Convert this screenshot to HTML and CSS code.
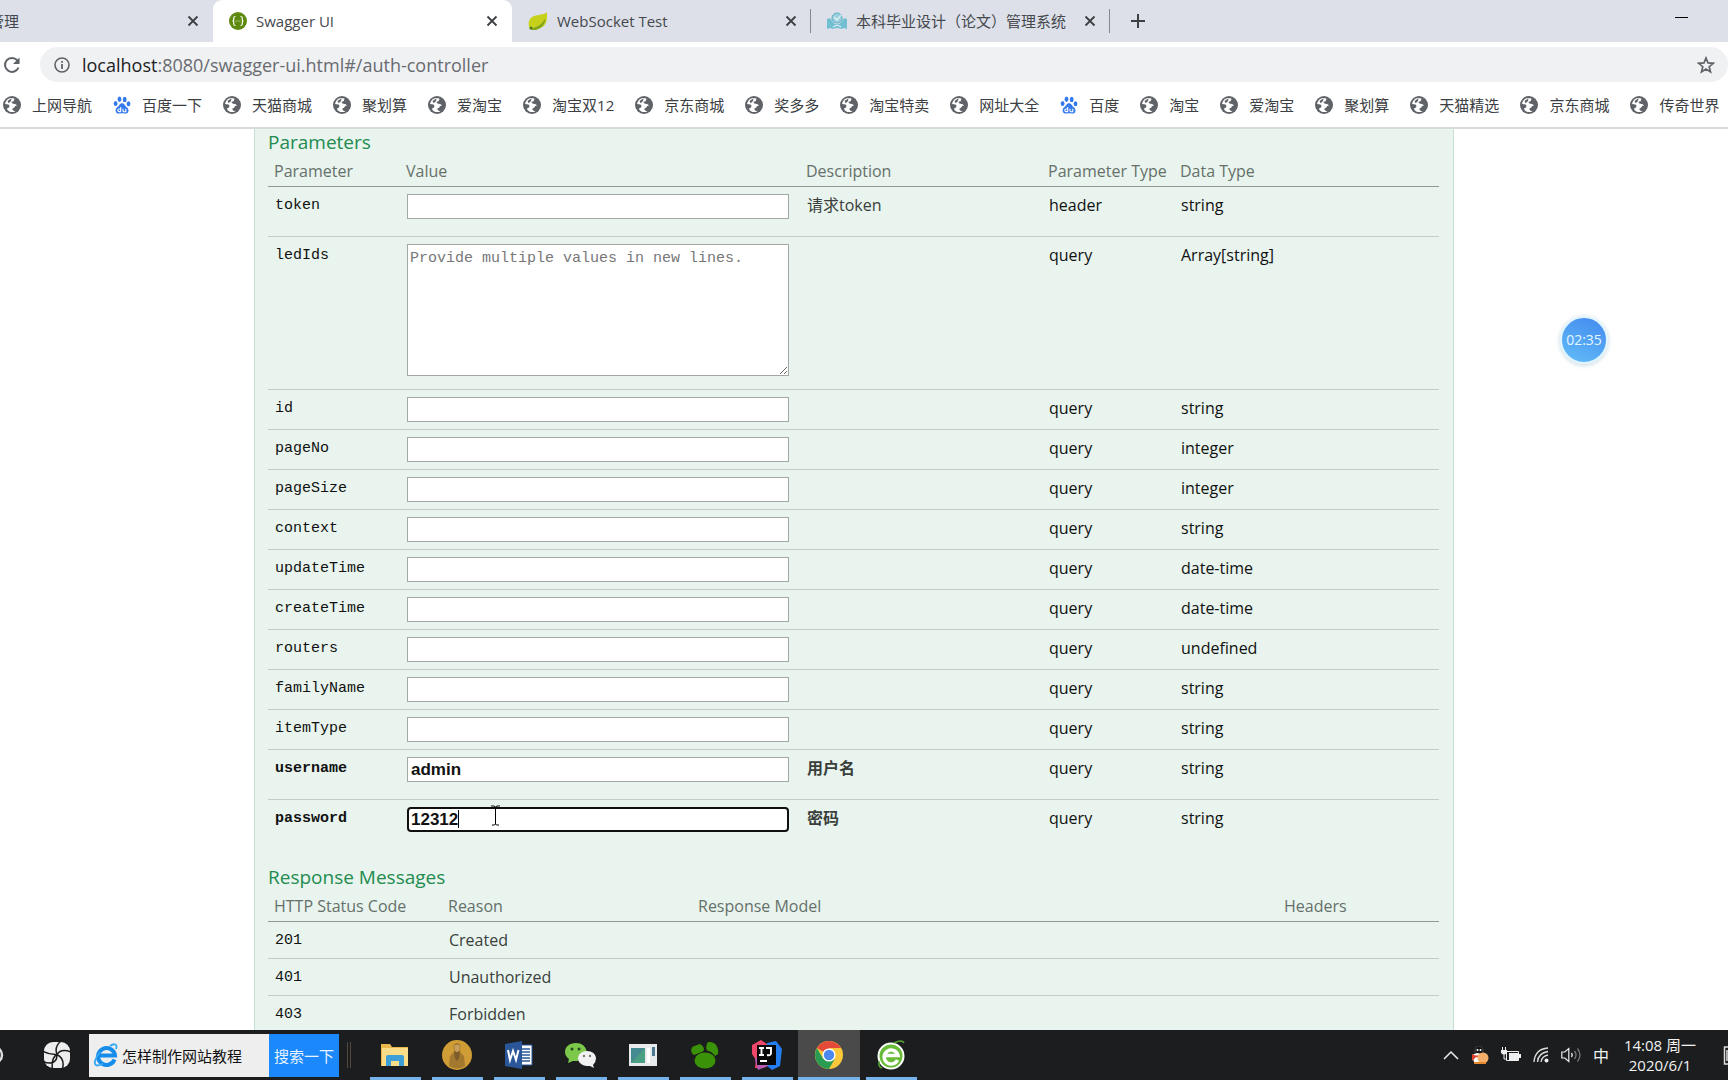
FILE: index.html
```html
<!DOCTYPE html>
<html lang="zh-CN">
<head>
<meta charset="utf-8">
<title>Swagger UI</title>
<link rel="stylesheet" href="styles.css">
</head>
<body>
<svg class="defs" aria-hidden="true">
  <symbol id="globe" viewBox="0 0 18 18"><circle cx="9" cy="9" r="9" fill="#5f6368"/><path d="M8 2C5 2.300 2.600 4.500 2 8L5.500 8.500 6.500 9.800 6 11.500 4 12.500 4.600 14.200C7 16.500 10 16.600 12.500 15.200L10 14.500 9.200 12.700 11 11.700 12.200 10 14 9.400 12.700 8.200 9.500 7.600 8.300 5.900 10.800 4.900 11.500 2.600Z" fill="#fff"/><path d="M4.500 5l4-2.800-.5 2.900-2.300 2.200Z" fill="#5f6368"/></symbol>
  <symbol id="baidu" viewBox="0 0 18 18"><g fill="#3479ee"><ellipse cx="6.500" cy="3.300" rx="1.900" ry="2.700"/><ellipse cx="11.700" cy="3.400" rx="1.900" ry="2.700"/><ellipse cx="2.600" cy="7.600" rx="1.900" ry="2.500"/><ellipse cx="15.500" cy="7.700" rx="1.900" ry="2.500"/><path d="M9 7.200C6.600 7.200 6.400 9.700 4.400 11 1.400 13.200 2.300 17.700 5.800 17.600Q9 17 12.300 17.600C15.900 17.700 16.600 13.300 13.800 11.200 11.800 9.700 11.400 7.200 9 7.200Z"/></g><path d="M7.700 11v4.700M7.700 13h-1.500q-1.400 0-1.400 1.300t1.400 1.300h1.500M10 12.700v2q0 1 1 1h1.800v-3" fill="none" stroke="#fff" stroke-width="1.100"/></symbol>
  <symbol id="close" viewBox="0 0 12 12"><path d="M1.500 1.500l9 9M10.500 1.500l-9 9" stroke="#3c4043" stroke-width="1.800"/></symbol>
</svg>

<header class="browser">
  <nav class="tabs" aria-label="标签页">
    <div class="tab tab-first"><span class="tab-title clipped">管理</span><button class="icon-btn tab-close" aria-label="关闭"><svg width="12" height="12"><use href="#close"/></svg></button></div>
    <div class="tab active">
      <svg width="18" height="18" viewBox="0 0 18 18"><circle cx="9" cy="9" r="9" fill="#5f8a10"/><path d="M6.500 4.500q-1.800 0-1.800 1.800v1.400q0 1.300-1.200 1.300 1.200 0 1.200 1.300v1.400q0 1.800 1.800 1.800M11.500 4.500q1.800 0 1.800 1.800v1.400q0 1.300 1.200 1.300-1.200 0-1.200 1.300v1.400q0 1.800-1.800 1.800" fill="none" stroke="#fff" stroke-width="1.200"/><path d="M6.600 9h1M8.500 9h1M10.400 9h1" stroke="#d8eaa8" stroke-width="1.200"/></svg>
      <span class="tab-title">Swagger UI</span><button class="icon-btn tab-close" aria-label="关闭"><svg width="12" height="12"><use href="#close"/></svg></button></div>
    <div class="tab divided">
      <svg width="20" height="20" viewBox="0 0 20 20"><path d="M19 1C16 4 11 3.500 6 5 0 7 0 13 1.500 17.500 4 20 13 19 17 13.500 19.500 10 19 5 19 1Z" fill="#c7d11c"/><path d="M1.500 17.500C8 17 14 14 17 7.500 18 12 14 17 9 18.500Q5 20 1.500 17.500Z" fill="#82a51c"/><circle cx="3" cy="17" r="1.500" fill="#4b7e22"/></svg>
      <span class="tab-title">WebSocket Test</span><button class="icon-btn tab-close" aria-label="关闭"><svg width="12" height="12"><use href="#close"/></svg></button></div>
    <div class="tab divided">
      <svg width="20" height="18" viewBox="0 0 20 18"><path d="M0 7Q4 5 5 9q5 7 10 0 1-4 5-2v10l-3-1-3 1q-4-2-8 0l-3-1-3 1Z" fill="#73bfd2"/><circle cx="10" cy="6" r="5" fill="#9ccfdd" stroke="#5bb0c7"/><path d="M7 5l3 3 4-5M6 15q4-3 8 0" fill="none" stroke="#e8f5f8" stroke-width="1.200"/></svg>
      <span class="tab-title">本科毕业设计（论文）管理系统</span><button class="icon-btn tab-close" aria-label="关闭"><svg width="12" height="12"><use href="#close"/></svg></button></div>
    <button class="icon-btn new-tab" aria-label="新标签页"><svg width="16" height="16"><path d="M8 1v14M1 8h14" stroke="#3c4043" stroke-width="2"/></svg></button>
    <button class="icon-btn minimize" aria-label="最小化"><svg width="13" height="3"><path d="M0 1.500h13" stroke="#000"/></svg></button>
  </nav>
  <div class="toolbar">
    <button class="icon-btn reload" aria-label="重新加载"><svg width="20" height="20" viewBox="0 0 20 20"><path d="M16.500 12.500A7 7 0 1 1 15.200 5.200L17 7" fill="none" stroke="#5f6368" stroke-width="2"/><path d="M17.500 2.500v6.500h-6.500Z" fill="#5f6368"/></svg></button>
    <div class="omnibox">
      <svg width="16" height="16" viewBox="0 0 16 16"><circle cx="8" cy="8" r="7" fill="none" stroke="#5f6368" stroke-width="1.600"/><path d="M8 7v5M8 4v1.800" stroke="#5f6368" stroke-width="1.800"/></svg>
      <span class="url"><b>localhost</b>:8080/swagger-ui.html#/auth-controller</span>
      <button class="icon-btn" aria-label="收藏"><svg width="18" height="18" viewBox="0 0 18 18"><path d="M9 2l2 4.900 5.300.4-4.100 3.400 1.300 5.200L9 13.100l-4.500 2.800 1.300-5.200L1.700 7.300 7 6.900Z" fill="none" stroke="#5f6368" stroke-width="1.700"/></svg></button>
    </div>
  </div>
  <nav class="bookmarks" aria-label="书签">
    <a href="#"><svg><use href="#globe"/></svg>上网导航</a>
    <a href="#"><svg><use href="#baidu"/></svg>百度一下</a>
    <a href="#"><svg><use href="#globe"/></svg>天猫商城</a>
    <a href="#"><svg><use href="#globe"/></svg>聚划算</a>
    <a href="#"><svg><use href="#globe"/></svg>爱淘宝</a>
    <a href="#"><svg><use href="#globe"/></svg>淘宝双12</a>
    <a href="#"><svg><use href="#globe"/></svg>京东商城</a>
    <a href="#"><svg><use href="#globe"/></svg>奖多多</a>
    <a href="#"><svg><use href="#globe"/></svg>淘宝特卖</a>
    <a href="#"><svg><use href="#globe"/></svg>网址大全</a>
    <a href="#"><svg><use href="#baidu"/></svg>百度</a>
    <a href="#"><svg><use href="#globe"/></svg>淘宝</a>
    <a href="#"><svg><use href="#globe"/></svg>爱淘宝</a>
    <a href="#"><svg><use href="#globe"/></svg>聚划算</a>
    <a href="#"><svg><use href="#globe"/></svg>天猫精选</a>
    <a href="#"><svg><use href="#globe"/></svg>京东商城</a>
    <a href="#"><svg><use href="#globe"/></svg>传奇世界</a>
  </nav>
</header>

<main class="page">
  <form class="operation">
    <h4>Parameters</h4>
    <table class="params">
      <colgroup><col class="c-name"><col class="c-value"><col class="c-desc"><col class="c-type"><col></colgroup>
      <thead><tr><th>Parameter</th><th>Value</th><th>Description</th><th>Parameter Type</th><th>Data Type</th></tr></thead>
      <tbody>
        <tr class="tall"><td><label for="token">token</label></td><td><input id="token" type="text"></td><td class="desc">请求token</td><td>header</td><td>string</td></tr>
        <tr class="area"><td><label for="ledIds">ledIds</label></td><td><textarea id="ledIds" placeholder="Provide multiple values in new lines."></textarea></td><td></td><td>query</td><td>Array[string]</td></tr>
        <tr><td><label for="id">id</label></td><td><input id="id" type="text"></td><td></td><td>query</td><td>string</td></tr>
        <tr><td><label for="pageNo">pageNo</label></td><td><input id="pageNo" type="text"></td><td></td><td>query</td><td>integer</td></tr>
        <tr><td><label for="pageSize">pageSize</label></td><td><input id="pageSize" type="text"></td><td></td><td>query</td><td>integer</td></tr>
        <tr><td><label for="context">context</label></td><td><input id="context" type="text"></td><td></td><td>query</td><td>string</td></tr>
        <tr><td><label for="updateTime">updateTime</label></td><td><input id="updateTime" type="text"></td><td></td><td>query</td><td>date-time</td></tr>
        <tr><td><label for="createTime">createTime</label></td><td><input id="createTime" type="text"></td><td></td><td>query</td><td>date-time</td></tr>
        <tr><td><label for="routers">routers</label></td><td><input id="routers" type="text"></td><td></td><td>query</td><td>undefined</td></tr>
        <tr><td><label for="familyName">familyName</label></td><td><input id="familyName" type="text"></td><td></td><td>query</td><td>string</td></tr>
        <tr><td><label for="itemType">itemType</label></td><td><input id="itemType" type="text"></td><td></td><td>query</td><td>string</td></tr>
        <tr class="tall required"><td><label for="username">username</label></td><td><input id="username" type="text" value="admin"></td><td class="desc">用户名</td><td>query</td><td>string</td></tr>
        <tr class="tall required"><td><label for="password">password</label></td><td><div class="field"><input id="password" class="focused" type="text" value="12312"><span class="caret"></span><svg class="ibeam" width="9" height="21" viewBox="0 0 9 21"><path d="M0 1h3l1.500 1L6 1h3M4.500 2v17M1 20h2.500l1-1 1 1H8" fill="none" stroke="#000"/></svg></div></td><td class="desc">密码</td><td>query</td><td>string</td></tr>
      </tbody>
    </table>
    <h4 class="responses-title">Response Messages</h4>
    <table class="responses">
      <colgroup><col class="c-code"><col class="c-reason"><col class="c-model"><col></colgroup>
      <thead><tr><th>HTTP Status Code</th><th>Reason</th><th>Response Model</th><th>Headers</th></tr></thead>
      <tbody>
        <tr><td class="code">201</td><td>Created</td><td></td><td></td></tr>
        <tr><td class="code">401</td><td>Unauthorized</td><td></td><td></td></tr>
        <tr><td class="code">403</td><td>Forbidden</td><td></td><td></td></tr>
      </tbody>
    </table>
  </form>
  <div class="timer">02:35</div>
</main>

<footer class="taskbar">
  <svg class="cortana" width="4" height="20" viewBox="0 0 4 20"><circle cx="-6" cy="10" r="8" fill="none" stroke="#ddd" stroke-width="2.500"/></svg>
  <button class="icon-btn" aria-label="浏览器"><svg width="28" height="28" viewBox="0 0 28 28"><rect x="1" y="1" width="26" height="26" rx="9" fill="#eee"/><path d="M0 10.500Q7 14 14 13.500 11 6 18 0M14 13.500Q18 7 28 11M14 13.500q8 4 5.500 14.500M14 13.500Q14 22 7 22 3 22 0 20M14 13.500Q8 17 9.500 28" fill="none" stroke="#1c1d1e" stroke-width="1.500"/></svg></button>
  <div class="search">
    <svg width="24" height="24" viewBox="0 0 24 24"><path d="M20.500 16.500A8.500 8.500 0 1 1 21 12.500H6" fill="none" stroke="#168ceb" stroke-width="4"/><path d="M16 3c4-3 8-2 6 3M6 9C1 15-1 22 3 22.500q3 0 6-2" fill="none" stroke="#35a8f2" stroke-width="1.800"/></svg>
    <input type="text" aria-label="搜索" value="怎样制作网站教程"><button>搜索一下</button>
  </div>
  <span class="grip"></span>
  <div class="apps">
    <button aria-label="文件资源管理器"><svg width="28" height="24" viewBox="0 0 28 24"><path d="M0 1h9l2 3h16v19H0Z" fill="#e8b84d"/><path d="M1 5h26v18H1Z" fill="#fbdc88"/><path d="M5 23v-9q0-2 2-2h14q2 0 2 2v9h-5v-5h-8v5Z" fill="#3d9fd6"/></svg></button>
    <button aria-label="头像应用"><svg width="30" height="30" viewBox="0 0 30 30"><circle cx="15" cy="15" r="15" fill="#d09c35"/><path d="M11.500 5q3.500-4 7 0l-.5 7 4 4 1 10q-8 5-16 0l1-10 4-4Z" fill="#a2792f"/><path d="M12.500 5h5v5l-2.500 3-2.500-3Z" fill="#c79e5c"/><path d="M12 11q3 2 6 0l-1 7-2 3-2-3Z" fill="#7c5b2a"/></svg></button>
    <button aria-label="Word"><svg width="28" height="28" viewBox="0 0 28 28"><path d="M14 4h13v20H14Z" fill="#fff" stroke="#2b579a"/><path d="M16 8h9M16 11h9M16 14h9M16 17h9M16 20h9" stroke="#2b579a" stroke-width="1.300"/><path d="M0 3l17-3v28L0 25Z" fill="#2b579a"/><path d="M3 9l2 10 3-9 3 9 2.500-10" fill="none" stroke="#fff" stroke-width="2"/></svg></button>
    <button aria-label="微信"><svg width="32" height="26" viewBox="0 0 32 26"><path d="M11 1C4 1 0 5 0 10q0 4 4 7l-1 4 5-2h4q9-1 10-9Q20 1 11 1Z" fill="#7bc84b"/><path d="M22 9c-6 0-9 4-9 7.500S17 24 22 24h3l4 2-1-3q3-3 3-6.500C31 12 27 9 22 9Z" fill="#f2f2f2"/><circle cx="7" cy="7" r="1.500" fill="#294c1e"/><circle cx="14" cy="7" r="1.500" fill="#294c1e"/><circle cx="19" cy="14" r="1.200" fill="#777"/><circle cx="25" cy="14" r="1.200" fill="#777"/></svg></button>
    <button aria-label="应用窗口"><svg width="28" height="24" viewBox="0 0 28 24"><path d="M0 1h28v22H0Z" fill="#e8ebed"/><path d="M2 5h14v15H2Z" fill="#438b91"/><path d="M2 20L16 5v15Z" fill="#4b9f83"/><path d="M18 5h3v15h-3Z" fill="#fff"/><path d="M23 4h3v9h-3Z" fill="#4c7990"/></svg></button>
    <button aria-label="绿色应用"><svg width="28" height="28" viewBox="0 0 28 28"><g fill="#399207"><ellipse cx="14" cy="19.500" rx="10.500" ry="8"/><path d="M9 3C13 5 14 9 12 10.500L3 14C-1 12 0 7 2 5.500ZM17 1c8-1 11 6 10 12l-3 2c-2-3-5-5-8-5.500Q14 5 17 1Z"/></g></svg></button>
    <button aria-label="IntelliJ IDEA"><svg width="30" height="30" viewBox="0 0 30 30"><path d="M0 5L9 0l9 6-6 22H3l1-8-4-6Z" fill="#ef4768"/><path d="M15 3l9-2 6 8-2 17-8 4-7-6Z" fill="#247ef0"/><path d="M3 20l7-12 6 18-10 4Z" fill="#b75bb5"/><path d="M5 5h19v20H5Z" fill="#080808"/><path d="M7 8h5M9.500 8v7M7 15h5M14 8h5v5q0 3-4 2M8 21h7" fill="none" stroke="#fff" stroke-width="1.900"/></svg></button>
    <button class="current" aria-label="Chrome"><svg width="28" height="28" viewBox="0 0 28 28"><circle cx="14" cy="14" r="14" fill="#fbc83b"/><path d="M14 14L1.900 7A14 14 0 0 1 26.100 7H14Z" fill="#e5493a"/><path d="M1.900 7A14 14 0 0 0 14 28L20 17.500 8 17.500Z" fill="#2a9c52"/><circle cx="14" cy="14" r="6.600" fill="#fff"/><circle cx="14" cy="14" r="5.200" fill="#4a88f0"/></svg></button>
    <button aria-label="360浏览器"><svg width="28" height="30" viewBox="0 0 28 30"><circle cx="14" cy="16" r="12.500" fill="#68bb36" stroke="#fff" stroke-width="2"/><path d="M20.500 20A7 7 0 1 1 21 15.500H8" fill="none" stroke="#fff" stroke-width="3.500"/><path d="M2 21Q1 27 5 28M17 3q8-4 10 0" fill="none" stroke="#57a332" stroke-width="1.500"/></svg></button>
  </div>
  <div class="tray">
    <svg width="16" height="10" viewBox="0 0 16 10"><path d="M1 9l7-7 7 7" fill="none" stroke="#eee" stroke-width="1.500"/></svg>
    <svg width="18" height="18" viewBox="0 0 18 18"><path d="M4 5q0-5 4-5t4 5v5H4Z" fill="#161616" stroke="#444"/><circle cx="6.500" cy="4" r="1" fill="#fff"/><circle cx="9.500" cy="4" r="1" fill="#fff"/><path d="M1 9l5-2 5 1-2 8H3Z" fill="#fff"/><path d="M1 8q5 3 10 0v4l-6-1-4 4Z" fill="#dd3e26"/><circle cx="12" cy="12" r="5.500" fill="#f3af69"/><path d="M3 17h12" stroke="#e5882d" stroke-width="2"/></svg>
    <svg width="20" height="16" viewBox="0 0 20 16"><path d="M5.500 4.500h12v9h-12Z" fill="none" stroke="#eee"/><path d="M8 6h9v7H8ZM18 7h2v4h-2ZM0 3h6v3q-3 3-6 0Z" fill="#eee"/><path d="M1.500 0v3M4.500 0v3M3 7v5h2" stroke="#eee" fill="none"/></svg>
    <svg width="16" height="16" viewBox="0 0 16 16"><g fill="none" stroke="#ddd" stroke-width="1.300"><path d="M1 15Q2 2 15 1M4.500 15Q5 6 15 4.500M8 15q1-6 7-7"/></g><circle cx="13.500" cy="13.500" r="2" fill="#eee"/></svg>
    <svg width="20" height="16" viewBox="0 0 20 16"><path d="M.8 5h3l4-3.500v13L3.800 11h-3Z" fill="none" stroke="#eee" stroke-width="1.200"/><path d="M10.500 6q1.500 2 0 4" fill="none" stroke="#eee" stroke-width="1.300"/><path d="M13.500 4q3 4 0 8M16.500 1.500q5 6.500 0 13" fill="none" stroke="#777" stroke-width="1.300"/></svg>
    <span class="ime">中</span>
    <time class="clock" datetime="2020-06-01T14:08">14:08 周一<br>2020/6/1</time>
    <svg width="5" height="20" viewBox="0 0 5 20"><path d="M5 2H1.500v17H5M4 5v11" fill="none" stroke="#ddd" stroke-width="1.500"/></svg>
  </div>
</footer>
</body>
</html>
```
FILE: styles.css
```css
* { box-sizing: border-box; }

body {
  margin: 0;
  height: 100vh;
  display: flex;
  flex-direction: column;
  overflow: hidden;
  background: #fff;
  font-family: "Open Sans", "Noto Sans CJK SC", sans-serif;
  font-size: 16px;
  color: #111;
}

.defs { display: none; }
svg { flex: none; display: block; }

.icon-btn {
  display: flex;
  flex: none;
  padding: 0;
  border: 0;
  background: none;
}

/* Browser chrome */
.browser { flex: none; border-bottom: 2px solid #d5dbd8; }

.tabs {
  display: flex;
  height: 42px;
  background: #dde0e9;
}

.tab {
  display: flex;
  align-items: center;
  gap: 9px;
  width: 299px;
  padding: 0 14px 0 16px;
  font-size: 15px;
  color: #45484d;
  position: relative;
}
.tab-first { width: 213px; padding-left: 0; }
.tab.active { background: #fff; border-radius: 9px 9px 0 0; }
.tab.divided::after {
  content: "";
  position: absolute;
  right: 0;
  top: 9px;
  height: 24px;
  border-right: 1px solid #85888f;
}
.tab-title { white-space: nowrap; line-height: 24px; }
.tab-title.clipped {
  display: flex;
  justify-content: flex-end;
  width: 19px;
  overflow: hidden;
}
.tab-close { margin-left: auto; }
.new-tab { align-self: center; margin-left: 20px; }
.minimize { align-self: center; margin: 0 40px 8px auto; }

.toolbar {
  display: flex;
  align-items: center;
  gap: 18px;
  padding: 5px 0 0 2px;
}
.omnibox {
  flex: 1;
  display: flex;
  align-items: center;
  gap: 12px;
  height: 35px;
  padding: 0 13px 0 14px;
  border-radius: 18px;
  background: #f0f1f3;
}
.url { flex: 1; font-size: 18px; color: #686b70; }
.url b { font-weight: 400; color: #202124; }

.bookmarks {
  display: flex;
  gap: 21px;
  height: 45px;
  padding-left: 3px;
  overflow: hidden;
}
.bookmarks a {
  display: flex;
  flex: none;
  align-items: center;
  gap: 11px;
  font-size: 15px;
  color: #3c4043;
  text-decoration: none;
}
.bookmarks svg { width: 18px; height: 18px; }

/* Swagger operation */
.page {
  flex: 1;
  min-height: 0;
  padding-right: 20px;
  overflow: hidden;
  position: relative;
}
.operation {
  width: 1200px;
  max-width: 100%;
  margin: 0 auto;
  padding: 0 14px 40px 13px;
  border: 1px solid #c6dfd1;
  border-top: 0;
  background: #e8f4ed;
}
h4 {
  margin: 0;
  font-size: 19px;
  font-weight: 400;
  line-height: 26px;
  color: #238b50;
}
.responses-title { margin-top: 14px; }

table {
  width: 100%;
  table-layout: fixed;
  border-collapse: separate;
  border-spacing: 0;
}
.c-name { width: 132px; }
.c-value { width: 400px; }
.c-desc { width: 242px; }
.c-type { width: 132px; }
.c-code { width: 174px; }
.c-reason { width: 250px; }
.c-model { width: 586px; }

th {
  padding: 5px 6px 4px;
  border-bottom: 1px solid #8f9a95;
  text-align: left;
  font-weight: 400;
  line-height: 22px;
  color: #66706b;
  white-space: nowrap;
}
td {
  height: 40px;
  padding: 7px;
  border-bottom: 1px solid #c3ccc7;
  vertical-align: top;
  line-height: 22px;
}
.tall td { height: 50px; }
.area td { height: 153px; }
.params tbody tr:last-child td { border-bottom: 0; }
.responses td { height: 37px; color: #3a3f3c; }
td.desc { color: #3a3f3c; }

label, td.code {
  font-family: "Liberation Mono", monospace;
  font-size: 15px;
  line-height: 24px;
}
label { display: block; }
.responses td.code { padding-bottom: 5px; color: #111; }
.required label, .required .desc { font-weight: 700; }

.params input, textarea {
  display: block;
  width: 382px;
  max-width: 100%;
  margin: 0;
  padding: 2px 3px;
  border: 1px solid #a3a8a5;
  border-radius: 0;
  background: #fff;
}
.params input {
  height: 25px;
  font: 700 17px "Liberation Sans", sans-serif;
  color: #111;
}
textarea {
  height: 132px;
  padding: 3px 2px;
  font: 15px/22px "Liberation Mono", monospace;
}
textarea::placeholder { color: #777; }

.field { position: relative; }
.params input.focused {
  padding: 1px 2px;
  border: 2px solid #101010;
  border-radius: 4px;
}
.caret {
  position: absolute;
  left: 51px;
  top: 3px;
  height: 18px;
  border-left: 1px solid #000;
}
.ibeam { position: absolute; left: 84px; top: -2px; }

.timer {
  position: absolute;
  top: 187px;
  right: 120px;
  width: 48px;
  height: 48px;
  border: 2px solid #dff5ff;
  border-radius: 50%;
  background: linear-gradient(25deg, #62bdf8, #4389ee);
  box-shadow: 0 1px 5px #c5d5df;
  color: #e4f7ff;
  font-size: 14px;
  line-height: 44px;
  text-align: center;
}

/* Taskbar */
.taskbar {
  flex: none;
  display: flex;
  align-items: center;
  height: 50px;
  background: #1c1d1e;
  color: #f2f2f2;
}
.cortana { margin-right: 39px; }
.search {
  display: flex;
  align-items: center;
  width: 250px;
  height: 43px;
  margin-left: 18px;
  padding-left: 5px;
  background: #eee;
}
.search input {
  flex: 1;
  min-width: 0;
  padding: 0 0 0 4px;
  border: 0;
  background: none;
  font: 15px "Open Sans", "Noto Sans CJK SC", sans-serif;
  color: #111;
}
.search button {
  width: 70px;
  height: 100%;
  padding: 0;
  border: 0;
  background: #1b88fb;
  font: 15px "Open Sans", "Noto Sans CJK SC", sans-serif;
  color: #e8f4ff;
}
.grip {
  width: 4px;
  height: 26px;
  margin: 0 13px 0 8px;
  border: 1px solid #54493f;
  border-width: 0 1px;
}
.apps { display: flex; height: 100%; }
.apps button {
  display: flex;
  align-items: center;
  justify-content: center;
  width: 62px;
  padding: 0;
  border: 0;
  background: linear-gradient(#76b3ea, #76b3ea) center bottom / 51px 3px no-repeat;
}
.apps .current {
  background: linear-gradient(#76b3ea, #76b3ea) center bottom / 62px 3px no-repeat #4a4a4a;
}
.tray {
  display: flex;
  align-items: center;
  gap: 12px;
  margin-left: auto;
}
.ime { font-size: 16px; }
.clock {
  width: 78px;
  margin-right: 12px;
  text-align: center;
  font-size: 15px;
  line-height: 20px;
  white-space: nowrap;
}
```
